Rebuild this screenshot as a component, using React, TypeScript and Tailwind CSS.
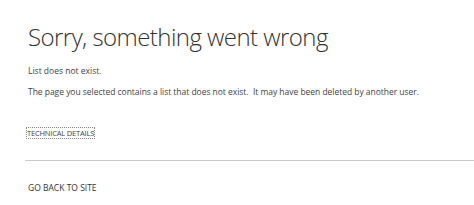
export default function App() {
  return (
    <div className="w-[474px] h-[205px] bg-white overflow-hidden text-[#333333] font-['Open_Sans','Liberation_Sans',sans-serif]">
      <div className="pl-[28px] pt-[21px]">
        <h1 className="text-[24px] leading-[32px] font-light text-[#333333] tracking-[-0.55px]">Sorry, something went wrong</h1>
        <p className="mt-[12px] text-[8.5px] leading-[12px] text-[#444444]">List does not exist.</p>
        <p className="mt-[9px] text-[8.5px] leading-[12px] text-[#444444] tracking-[-0.03px]">The page you selected contains a list that does not exist.&nbsp; It may have been deleted by another user.</p>
        <div className="mt-[30px] flex -ml-px">
          <span className="text-[7.5px] leading-[10px] text-[#444444] tracking-[-0.18px] outline outline-1 outline-dotted outline-[#888888]">TECHNICAL DETAILS</span>
        </div>
      </div>
      <div className="ml-[25px] mt-[22px] h-px bg-[#c8c8c8]" />
      <div className="pl-[28px] mt-[12px]">
        <span className="text-[8.5px] leading-[12px] text-[#333333]">GO BACK TO SITE</span>
      </div>
    </div>
  );
}
